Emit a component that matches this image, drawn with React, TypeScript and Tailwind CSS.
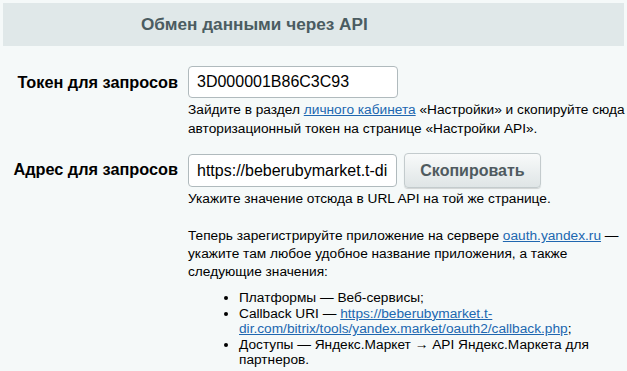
export default function App() {
  return (
    <div className="min-h-[371px] w-[627px] bg-[#f5f9f9] pt-[3px] text-black [font-family:'Liberation_Sans',Arial,sans-serif]">
      <div className="mx-[3px] flex h-[43px] items-center bg-[#e0e8e9] pl-[138px] text-[17.2px] font-bold text-[#4b5c61]">
        Обмен данными через API
      </div>

      <div className="mt-[20px] grid grid-cols-[178px_1fr] gap-x-[10px]">
        <div className="flex h-[32px] items-center justify-end text-[16.3px] font-bold">
          Токен для запросов
        </div>
        <div>
          <input
            readOnly
            value="3D000001B86C3C93"
            className="h-[32px] w-[210px] rounded-[4px] border border-[#b0babd] bg-white px-[8px] text-[16px] outline-none"
          />
          <p className="mt-[2px] text-[13.7px] leading-[19px]">
            Зайдите в раздел{" "}
            <a href="#" className="text-[#2067b0] underline">
              личного кабинета
            </a>{" "}
            «Настройки» и скопируйте сюда авторизационный токен на странице «Настройки API».
          </p>
        </div>
      </div>

      <div className="mt-[15px] grid grid-cols-[178px_1fr] gap-x-[10px]">
        <div className="flex h-[33px] items-center justify-end text-[16.3px] font-bold">
          Адрес для запросов
        </div>
        <div>
          <div className="flex items-center gap-[7px]">
            <input
              readOnly
              value="https://beberubymarket.t-dir.com/bitrix/tools/yandex.market/"
              className="h-[33px] w-[209px] rounded-[4px] border border-[#b0babd] bg-white px-[8px] text-[16px] outline-none"
            />
            <button className="h-[35px] w-[137px] rounded-[4px] border border-[#c3cbcd] bg-gradient-to-b from-[#f8fafa] to-[#dfe5e6] text-[16px] font-bold text-[#4f5a5f] shadow-[0_1px_1px_rgba(0,0,0,0.15)]">
              Скопировать
            </button>
          </div>
          <p className="mt-[1px] text-[13.7px] leading-[19px]">
            Укажите значение отсюда в URL API на той же странице.
          </p>
          <p className="mt-[19px] pr-[4px] text-[13.7px] leading-[18px]">
            Теперь зарегистрируйте приложение на сервере{" "}
            <a href="#" className="text-[#2067b0] underline">
              oauth.yandex.ru
            </a>{" "}
            — укажите там любое удобное название приложения, а также следующие значения:
          </p>
          <ul className="mt-[9px] list-disc pl-[51px] pr-[4px] text-[13.7px] leading-[15.5px]">
            <li>Платформы — Веб-сервисы;</li>
            <li>
              Callback URI —{" "}
              <a href="#" className="text-[#2067b0] underline">
                https://beberubymarket.t-dir.com/bitrix/tools/yandex.market/oauth2/callback.php
              </a>
              ;
            </li>
            <li>Доступы — Яндекс.Маркет → API Яндекс.Маркета для партнеров.</li>
          </ul>
        </div>
      </div>
    </div>
  );
}
